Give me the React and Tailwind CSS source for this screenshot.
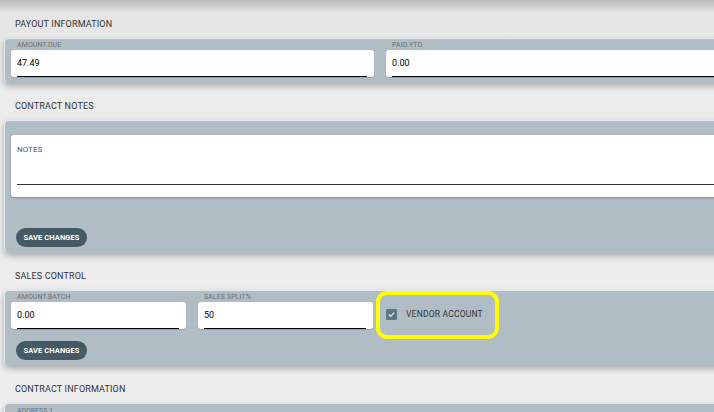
import React from "react";

const font = { fontFamily: "Roboto, 'Liberation Sans', sans-serif" };

function Heading({ children }) {
  return (
    <div className="pt-[17px] pb-[8px] pl-[15px] text-[9px] leading-[12px] text-[#333] tracking-[0.15px]">
      {children}
    </div>
  );
}

function Panel({ children, className = "" }) {
  return (
    <div
      className={
        "ml-[4px] w-[760px] bg-[#b1bdc5] rounded-tl-[5px] rounded-bl-[5px] border-t border-l border-[#e3e8eb] shadow-[0_3px_6px_rgba(0,0,0,0.28)] " +
        className
      }
    >
      {children}
    </div>
  );
}

function Field({ label, value, width }) {
  return (
    <div className={"flex flex-col " + width}>
      <div className="pl-[6px] h-[8px] text-[7px] leading-[8px] text-[#6b6f72] mb-[1px] tracking-[0.1px]">
        {label}
      </div>
      <div className="relative h-[27px] bg-white rounded-[3px] shadow-[0_1px_1px_rgba(0,0,0,0.15)] flex items-center px-[6px]">
        <span className="text-[9px] text-black leading-none">{value}</span>
        <div className="absolute left-[6px] right-[7px] bottom-0 h-[1.5px] bg-black" />
      </div>
    </div>
  );
}

function SaveButton() {
  return (
    <button className="ml-[11px] h-[19px] w-[71px] rounded-full bg-[#455a64] text-white text-[7.5px] font-bold flex items-center justify-center tracking-[0.1px]">
      SAVE CHANGES
    </button>
  );
}

export default function App() {
  return (
    <div
      style={font}
      className="w-[714px] h-[412px] overflow-hidden bg-[linear-gradient(to_bottom,#b9b9b9_0px,#e4e4e4_12px,#ebebeb_60px,#eeeeee_100%)]"
    >
      <div className="pt-[1px]">
        <Heading>PAYOUT INFORMATION</Heading>
        <Panel className="pt-[2px] pb-[6px] px-[6px]">
          <div className="flex gap-[12px]">
            <Field label="AMOUNT.DUE" value="47.49" width="w-[363px]" />
            <Field label="PAID.YTD" value="0.00" width="w-[363px]" />
          </div>
        </Panel>

        <Heading>CONTRACT NOTES</Heading>
        <Panel className="pt-[14px] pb-[6px]">
          <div className="relative ml-[6px] h-[62px] bg-white rounded-l-[3px] shadow-[0_1px_2px_rgba(0,0,0,0.25)] pl-[6px] pt-[10px]">
            <div className="text-[8px] leading-[10px] text-[#555]">NOTES</div>
            <div className="absolute left-[6px] right-0 bottom-[12px] h-[1.5px] bg-[#333]" />
          </div>
          <div className="h-[31px]" />
          <SaveButton />
        </Panel>

        <Heading>SALES CONTROL</Heading>
        <Panel className="pt-[2px] pb-[6px]">
          <div className="flex items-start gap-[12px] px-[6px]">
            <Field label="AMOUNT.BATCH" value="0.00" width="w-[175px]" />
            <Field label="SALES SPLIT%" value="50" width="w-[175px]" />
            <div className="relative ml-[1px] mt-[16px] flex items-center gap-[9px]">
              <div className="w-[11px] h-[11px] bg-[#5e7786] rounded-[1px] flex items-center justify-center">
                <svg viewBox="0 0 12 12" className="w-[9px] h-[9px]">
                  <path d="M2.5 6.2 L5 8.5 L9.5 3.5" fill="none" stroke="white" strokeWidth="1.4" />
                </svg>
              </div>
              <span className="text-[8.5px] leading-none text-[#333] tracking-[0.2px]">
                VENDOR ACCOUNT
              </span>
              <div className="absolute left-[-10px] top-[-18px] w-[123px] h-[48px] border-[4px] border-[#ffff00] rounded-[11px]" />
            </div>
          </div>
          <div className="h-[12px]" />
          <SaveButton />
        </Panel>

        <Heading>CONTRACT INFORMATION</Heading>
        <Panel className="pt-[3px] px-[6px] h-[40px]">
          <div className="pl-[6px] text-[7px] leading-[8px] text-[#6b6f72]">ADDRESS 1</div>
        </Panel>
      </div>
    </div>
  );
}
